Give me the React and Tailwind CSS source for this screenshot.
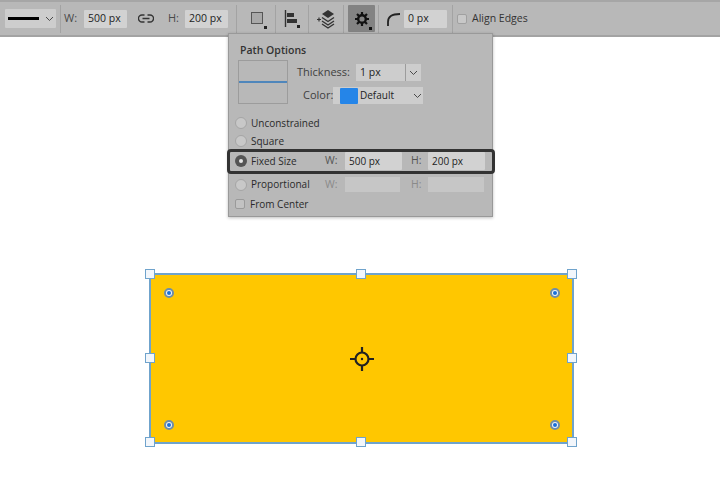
const Sep = ({ className = "" }) => <div className={`w-px h-[28px] bg-[#a3a3a3] shrink-0 ${className}`} />;
const Chevron = ({ className = "" }) => (
  <svg width="9" height="6" viewBox="0 0 9 6" className={className}><path d="M1 1l3.5 3.5L8 1" fill="none" stroke="#4a4a4a" strokeWidth="1" /></svg>
);
const Input = ({ w, children, small }) => (
  <div className={`h-[18px] rounded-[1px] flex items-center pl-[4px] text-[#222] bg-[#d2d2d2] ${small ? "text-[10px]" : "text-[10.5px]"} ${w}`}>{children}</div>
);
const Radio = ({ on }) => (
  <div className={`w-[12px] h-[12px] rounded-full shrink-0 flex items-center justify-center ${on ? "bg-[#555]" : "bg-[#c8c8c8] border border-[#a5a5a5]"}`}>
    {on && <div className="w-[4px] h-[4px] rounded-full bg-[#e6e6e6]" />}
  </div>
);
const Handle = ({ x, y }) => (
  <div className="absolute w-[10px] h-[10px] bg-[#f2f6fb] border border-[#6fa3cc]" style={{ left: x - 5, top: y - 5 }} />
);
const Dot = ({ x, y }) => (
  <div className="absolute w-[10px] h-[10px] rounded-full bg-[#eef4fa] border-[2px] border-[#6f8ea8] flex items-center justify-center" style={{ left: x - 5, top: y - 5 }}>
    <div className="w-[4px] h-[4px] rounded-full bg-[#1a6fd6]" />
  </div>
);

export default function App() {
  return (
    <div className="relative w-[720px] h-[498px] overflow-hidden bg-white text-[#2a2a2a] text-[10px] font-['Open_Sans',sans-serif]">
      <div className="h-[37px] bg-[#b8b8b8] border-t-[2px] border-t-[#a6a6a6] border-b-[2px] border-b-[#a3a3a3] flex items-center pl-[5px] text-[#4a4a4a]">
        <div className="w-[51px] h-[19px] bg-[#cdcdcd] rounded-[1px] flex items-center pl-[3px] shrink-0">
          <div className="w-[31px] h-[3px] bg-black" />
          <Chevron className="ml-[6px]" />
        </div>
        <Sep className="ml-[4px]" />
        <span className="ml-[3px] w-[20px] text-[11px]">W:</span>
        <Input w="w-[43px]">500 px</Input>
        <svg width="16" height="9" viewBox="0 0 16 9" className="ml-[11px]">
          <path d="M6.5 1H4a3.5 3.5 0 0 0 0 7h2.5M9.5 1H12a3.5 3.5 0 0 1 0 7H9.5M4.5 4.5h7" fill="none" stroke="#333" strokeWidth="1.3" />
        </svg>
        <span className="ml-[14px] w-[17px] text-[11px]">H:</span>
        <Input w="w-[43px]">200 px</Input>
        <Sep className="ml-[8px]" />
        <div className="relative w-[16px] h-[18px] ml-[14px] pt-[2px] shrink-0">
          <div className="w-[12px] h-[12px] bg-[#a8a8a8] border border-[#555]" />
          <div className="absolute right-0 bottom-[-1px] w-[3px] h-[3px] bg-[#222]" />
        </div>
        <Sep className="ml-[8px]" />
        <svg width="16" height="18" viewBox="0 0 16 18" className="ml-[8px]">
          <path d="M1.500 0v17" stroke="#333" strokeWidth="1.4" />
          <path d="M3 3h7v4H3zM3 9h10v4H3z" fill="#333" />
          <path d="M13 15h3v3h-3z" fill="#222" />
        </svg>
        <Sep className="ml-[8px]" />
        <svg width="20" height="20" viewBox="0 0 20 20" className="ml-[8px]">
          <path d="M0 10.500h4M2 8.500v4" stroke="#333" strokeWidth="1.200" />
          <path d="M5 5l6-4 6 4-6 4z" fill="#333" />
          <path d="M5 8.500l6 4 6-4M5 12l6 4 6-4M5 15l6 4 6-4" fill="none" stroke="#333" strokeWidth="1.400" />
        </svg>
        <Sep className="ml-[6px]" />
        <div className="relative w-[27px] h-[27px] ml-[4px] bg-[#838383] rounded-[1px] flex items-center justify-center shrink-0">
          <svg width="16" height="16" viewBox="0 0 16 16">
            <circle cx="8" cy="8" r="3.800" fill="none" stroke="#111" strokeWidth="2.400" />
            <path d="M8 1v3M8 12v3M1 8h3M12 8h3M3 3l2 2M11 11l2 2M13 3l-2 2M5 11l-2 2" stroke="#111" strokeWidth="2.200" />
          </svg>
          <div className="absolute right-[3px] bottom-[2px] w-[3px] h-[3px] bg-[#111]" />
        </div>
        <Sep className="ml-[3px]" />
        <svg width="14" height="14" viewBox="0 0 14 14" className="ml-[8px]">
          <path d="M1 14V10C1 5 4.500 2 13 2" fill="none" stroke="#222" strokeWidth="1.800" />
        </svg>
        <div className="ml-[3px]"><Input w="w-[43px]">0 px</Input></div>
        <Sep className="ml-[5px]" />
        <div className="w-[10px] h-[10px] ml-[4px] bg-[#c8c8c8] border border-[#a0a0a0] rounded-[2px]" />
        <span className="ml-[5px] text-[10.5px] text-[#333]">Align Edges</span>
      </div>

      <div className="absolute left-[228px] top-[33px] w-[265px] h-[184px] bg-[#b8b8b8] border border-[#999] shadow-[0_1px_3px_rgba(0,0,0,0.25)] pt-[9px]">
        <div className="pl-[11px] font-semibold text-[10.5px] leading-[14px] text-[#333]">Path Options</div>
        <div className="flex pl-[9px] mt-[3px]">
          <div className="w-[50px] h-[44px] border border-[#9c9c9c] flex items-center">
            <div className="w-full h-[2px] bg-[#4f86bb]" />
          </div>
          <div className="flex flex-col">
            <div className="flex items-center mt-[4px] h-[17px]">
              <span className="ml-[9px] w-[59px] text-[11px] text-[#404040]">Thickness:</span>
              <div className="w-[65px] h-[17px] bg-[#cdcdcd] flex items-center">
                <span className="pl-[4px] w-[50px] border-r border-[#9c9c9c] text-[#222] text-[10.5px] leading-[17px]">1 px</span>
                <Chevron className="ml-[3px]" />
              </div>
            </div>
            <div className="flex items-center mt-[6px] h-[17px]">
              <span className="ml-[15px] w-[30px] text-[11px] text-[#404040]">Color:</span>
              <div className="w-[90px] h-[17px] bg-[#cdcdcd] flex items-center pl-[7px]">
                <div className="w-[18px] h-[16px] bg-[#2585e8] rounded-[1px]" />
                <span className="ml-[2px] text-[#222] text-[10px]">Default</span>
                <Chevron className="ml-[19px]" />
              </div>
            </div>
          </div>
        </div>
        <div className="flex items-center gap-[4px] pl-[6px] mt-[12px] h-[14px]"><Radio /><span>Unconstrained</span></div>
        <div className="flex items-center gap-[4px] pl-[6px] mt-[4px] h-[14px]"><Radio /><span>Square</span></div>
        <div className="flex items-center pl-[6px] mt-[4px] h-[18px]">
          <Radio on />
          <span className="ml-[4px] w-[74px]">Fixed Size</span>
          <span className="w-[20px] text-[#555] text-[10.5px]">W:</span>
          <Input small w="w-[57px]">500 px</Input>
          <span className="ml-[9px] w-[17px] text-[#555] text-[10.5px]">H:</span>
          <Input small w="w-[57px]">200 px</Input>
        </div>
        <div className="flex items-center pl-[6px] mt-[7px] h-[15px]">
          <Radio />
          <span className="ml-[4px] w-[74px]">Proportional</span>
          <span className="w-[20px] text-[#8a8a8a] text-[10.5px]">W:</span>
          <div className="w-[55px] h-[15px] bg-[#c6c6c6]" />
          <span className="ml-[11px] w-[17px] text-[#8a8a8a] text-[10.5px]">H:</span>
          <div className="w-[56px] h-[15px] bg-[#c6c6c6]" />
        </div>
        <div className="flex items-center gap-[5px] pl-[6px] mt-[5px] h-[14px]">
          <div className="w-[10px] h-[10px] bg-[#c2c2c2] border border-[#9a9a9a] rounded-[2px]" />
          <span>From Center</span>
        </div>
      </div>

      <div className="absolute left-[227px] top-[149px] w-[268px] h-[25px] border-[3px] border-[#333] rounded-[4px]" />

      <div className="absolute left-[149px] top-[273px] w-[425px] h-[171px] bg-[#ffc700] border-2 border-[#6fa3cc]" />
      <Handle x={149.500} y={273.500} />
      <Handle x={361} y={273.500} />
      <Handle x={572} y={273.500} />
      <Handle x={149.500} y={358} />
      <Handle x={572} y={358} />
      <Handle x={149.500} y={442} />
      <Handle x={361} y={442} />
      <Handle x={572} y={442} />
      <Dot x={168.500} y={292.500} />
      <Dot x={555} y={292.500} />
      <Dot x={168.500} y={425} />
      <Dot x={555} y={425} />
      <svg width="26" height="26" viewBox="0 0 26 26" className="absolute left-[349px] top-[346px]">
        <circle cx="13" cy="13" r="6.500" fill="none" stroke="#222" strokeWidth="2.200" />
        <circle cx="13" cy="13" r="1.200" fill="#222" />
        <path d="M13 1v6M13 19v6M1 13h6M19 13h6" stroke="#222" strokeWidth="2.200" />
      </svg>
    </div>
  );
}
